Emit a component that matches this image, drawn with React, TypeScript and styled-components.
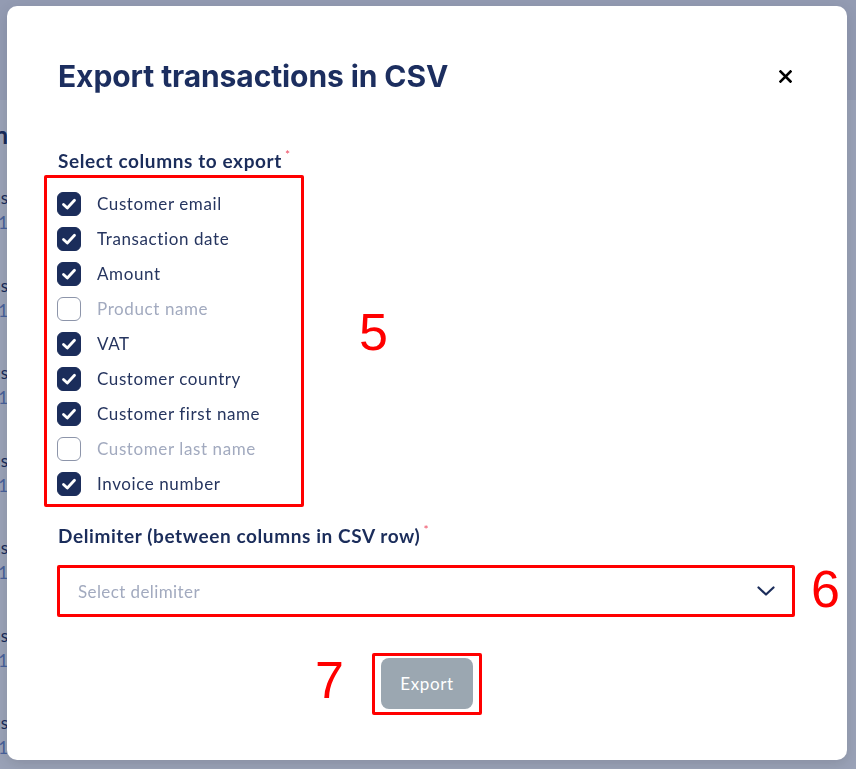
import React, { useState } from 'react'
import styled, { createGlobalStyle } from 'styled-components'

const GlobalStyle = createGlobalStyle`
    html, body {
        margin: 0;
        padding: 0;
        background: #ffffff;
    }
    body {
        font-family: Lato, "Noto Sans", sans-serif;
        width: 856px;
        height: 769px;
        overflow: hidden;
    }
    * { box-sizing: border-box; }
`

interface IColumn {
    key: string;
    label: string;
    checked: boolean;
}

const initialColumns: IColumn[] = [
    { key: 'email', label: 'Customer email', checked: true },
    { key: 'date', label: 'Transaction date', checked: true },
    { key: 'amount', label: 'Amount', checked: true },
    { key: 'product', label: 'Product name', checked: false },
    { key: 'vat', label: 'VAT', checked: true },
    { key: 'country', label: 'Customer country', checked: true },
    { key: 'first', label: 'Customer first name', checked: true },
    { key: 'last', label: 'Customer last name', checked: false },
    { key: 'invoice', label: 'Invoice number', checked: true },
]

// page behind the dialog, only a sliver of it shows on the left
const Page = styled.div`
    height: 769px;
    display: flex;
    flex-direction: column;
`

const PageHeader = styled.div`
    height: 100px;
    flex: none;
    background: #f2f3f7;
`

const PageBody = styled.div`
    display: flex;
    flex-direction: column;
    padding-top: 21px;
`

const Sliver = styled.div<{ $tone?: 'title' | 'name' | 'date' }>`
    width: 8px;
    display: flex;
    justify-content: flex-end;
    white-space: nowrap;
    font-size: ${p => (p.$tone === 'title' ? '24px' : '17px')};
    font-weight: ${p => (p.$tone === 'title' ? 700 : 400)};
    color: ${p => (p.$tone === 'date' ? '#6f8ccc' : '#1b2d5b')};
    line-height: ${p => (p.$tone === 'title' ? '28px' : '25px')};
`

const TitleGap = styled.div`
    height: 36px;
`

const BehindItem = styled.div`
    display: flex;
    flex-direction: column;
    height: 87.5px;
`

const Overlay = styled.div`
    position: fixed;
    inset: 0;
    background: rgba(22, 40, 88, 0.43);
`

const Modal = styled.div`
    position: fixed;
    top: 6px;
    left: 7px;
    width: 840px;
    height: 754px;
    background: #ffffff;
    border-radius: 10px;
    box-shadow: 0 4px 14px rgba(0, 0, 0, 0.12);
    padding: 48px 50px 0 50px;
    display: flex;
    flex-direction: column;
`

const Header = styled.div`
    height: 44px;
    display: flex;
    align-items: center;
    justify-content: space-between;
`

const Title = styled.h2`
    margin: 0 0 0 1px;
    font-family: Inter, "Noto Sans", sans-serif;
    font-weight: 700;
    font-size: 30px;
    line-height: 44px;
    color: #1c2e5f;
    letter-spacing: -0.1px;
`

const CloseButton = styled.button`
    width: 24px;
    height: 24px;
    padding: 0;
    border: none;
    background: transparent;
    display: flex;
    align-items: center;
    justify-content: center;
    cursor: pointer;
`

const FieldLabel = styled.div<{ $gap: number }>`
    margin-top: ${p => p.$gap}px;
    margin-left: 1px;
    font-size: 19px;
    font-weight: 700;
    line-height: 24px;
    letter-spacing: 0.6px;
    color: #1b2d5b;
    display: flex;
`

const Required = styled.span`
    color: #ee4b62;
    font-size: 12px;
    line-height: 12px;
    margin-left: 3px;
    font-weight: 400;
`

const Annotated = styled.div`
    position: relative;
`

const RedBox = styled.div<{ $t: number; $l: number; $r: number; $b: number }>`
    position: absolute;
    top: ${p => p.$t}px;
    left: ${p => p.$l}px;
    right: ${p => p.$r}px;
    bottom: ${p => p.$b}px;
    border: 3px solid #ff0000;
    border-radius: 2px;
    pointer-events: none;
`

const Marker = styled.span<{ $top: number; $left: string }>`
    position: absolute;
    top: ${p => p.$top}px;
    left: ${p => p.$left};
    font-family: "Liberation Sans", Arial, sans-serif;
    font-size: 52px;
    line-height: 52px;
    color: #ff0000;
`

const CheckList = styled.div`
    margin-top: 13px;
    width: 240px;
    display: flex;
    flex-direction: column;
`

const CheckRow = styled.label<{ $checked: boolean }>`
    height: 35px;
    display: flex;
    align-items: center;
    gap: 16px;
    font-size: 17px;
    letter-spacing: 0.6px;
    white-space: nowrap;
    color: ${p => (p.$checked ? '#26355f' : '#a2aabf')};
    cursor: pointer;
`

const Box = styled.span<{ $checked: boolean }>`
    width: 24px;
    height: 24px;
    flex: none;
    border-radius: 6px;
    background: ${p => (p.$checked ? '#1b2d5b' : '#ffffff')};
    border: 1px solid ${p => (p.$checked ? '#1b2d5b' : '#8d95aa')};
    display: flex;
    align-items: center;
    justify-content: center;
`

const SelectWrap = styled(Annotated)`
    margin-top: 17px;
`

const Select = styled.div`
    height: 52px;
    width: 738px;
    border: 1px solid #d5dae3;
    border-radius: 6px;
    padding: 0 19px 0 20px;
    display: flex;
    align-items: center;
    justify-content: space-between;
`

const Placeholder = styled.span`
    font-size: 17px;
    letter-spacing: 0.4px;
    color: #a2aabf;
`

const Footer = styled.div`
    margin-top: 41px;
    display: flex;
    justify-content: center;
`

const ExportButton = styled.button`
    width: 92px;
    height: 51px;
    border: none;
    border-radius: 8px;
    background: #9ba7b1;
    color: #ffffff;
    font-family: Lato, "Noto Sans", sans-serif;
    font-size: 17px;
    letter-spacing: 0.6px;
    cursor: not-allowed;
`

function Check() {
    return (
        <svg width="16" height="14" viewBox="0 0 16 14" fill="none">
            <path d="M2.5 7.4 L6.3 11 L13.5 3.2" stroke="#ffffff" strokeWidth="2.8" strokeLinecap="round" strokeLinejoin="round" />
        </svg>
    )
}

export default function App() {
    const [columns, setColumns] = useState<IColumn[]>(initialColumns)

    const toggle = (key: string) =>
        setColumns(cols => cols.map(c => (c.key === key ? { ...c, checked: !c.checked } : c)))

    return (
        <>
            <GlobalStyle />
            <Page>
                <PageHeader />
                <PageBody>
                    <Sliver $tone="title">Transaction</Sliver>
                    <TitleGap />
                    {Array.from({ length: 7 }).map((_, i) => (
                        <BehindItem key={i}>
                            <Sliver $tone="name">Status</Sliver>
                            <Sliver $tone="date">2021/01</Sliver>
                        </BehindItem>
                    ))}
                </PageBody>
            </Page>
            <Overlay />
            <Modal>
                <Header>
                    <Title>Export transactions in CSV</Title>
                    <CloseButton aria-label="Close">
                        <svg width="13" height="13" viewBox="0 0 13 13">
                            <path d="M1.5 1.5 L11.5 11.5 M11.5 1.5 L1.5 11.5" stroke="#000000" strokeWidth="2.6" strokeLinecap="square" />
                        </svg>
                    </CloseButton>
                </Header>

                <FieldLabel $gap={51}>
                    Select columns to export<Required>*</Required>
                </FieldLabel>
                <Annotated>
                    <CheckList>
                        {columns.map(col => (
                            <CheckRow key={col.key} $checked={col.checked} onClick={() => toggle(col.key)}>
                                <Box $checked={col.checked}>{col.checked && <Check />}</Box>
                                {col.label}
                            </CheckRow>
                        ))}
                    </CheckList>
                    <RedBox $t={2} $l={-13} $r={493} $b={-6} />
                    <Marker $top={133} $left="302px">5</Marker>
                </Annotated>

                <FieldLabel $gap={23}>
                    Delimiter (between columns in CSV row)<Required>*</Required>
                </FieldLabel>
                <SelectWrap>
                    <Select>
                        <Placeholder>Select delimiter</Placeholder>
                        <svg width="18" height="10" viewBox="0 0 18 10" fill="none">
                            <path d="M1.5 1.5 L9 8.5 L16.5 1.5" stroke="#1b2d5b" strokeWidth="2.2" strokeLinecap="round" strokeLinejoin="round" />
                        </svg>
                    </Select>
                    <RedBox $t={0} $l={0} $r={2} $b={0} />
                    <Marker $top={-2} $left="754px">6</Marker>
                </SelectWrap>

                <Footer>
                    <Annotated>
                        <ExportButton disabled>Export</ExportButton>
                        <RedBox $t={-5} $l={-9} $r={-9} $b={-6} />
                        <Marker $top={-4} $left="-66px">7</Marker>
                    </Annotated>
                </Footer>
            </Modal>
        </>
    )
}
